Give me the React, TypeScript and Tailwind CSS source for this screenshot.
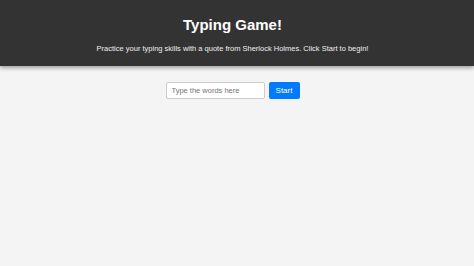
export default function App() {
  return (
    <div className="min-h-screen w-full bg-[#f4f4f4] font-['Liberation_Sans',Arial,sans-serif]">
      <header className="h-[66px] bg-[#333333] text-white flex flex-col items-center pr-[9px] shadow-[0_2px_4px_rgba(0,0,0,0.35)]">
        <h1 className="mt-[16px] text-[15px] leading-[18px] font-bold">Typing Game!</h1>
        <p className="mt-[10px] text-[7.5px] leading-[10px] text-[#f0f0f0]">
          Practice your typing skills with a quote from Sherlock Holmes. Click Start to begin!
        </p>
      </header>
      <main className="flex justify-center gap-[4px] pt-[16px] pr-[9px]">
        <input
          type="text"
          placeholder="Type the words here"
          className="w-[99px] h-[17px] bg-white border border-[#cccccc] rounded-[2px] px-[5px] text-[7.5px] placeholder:text-[#757575] outline-none"
        />
        <button className="w-[31px] h-[17px] bg-[#007bff] text-white text-[8px] rounded-[2px]">
          Start
        </button>
      </main>
    </div>
  );
}
